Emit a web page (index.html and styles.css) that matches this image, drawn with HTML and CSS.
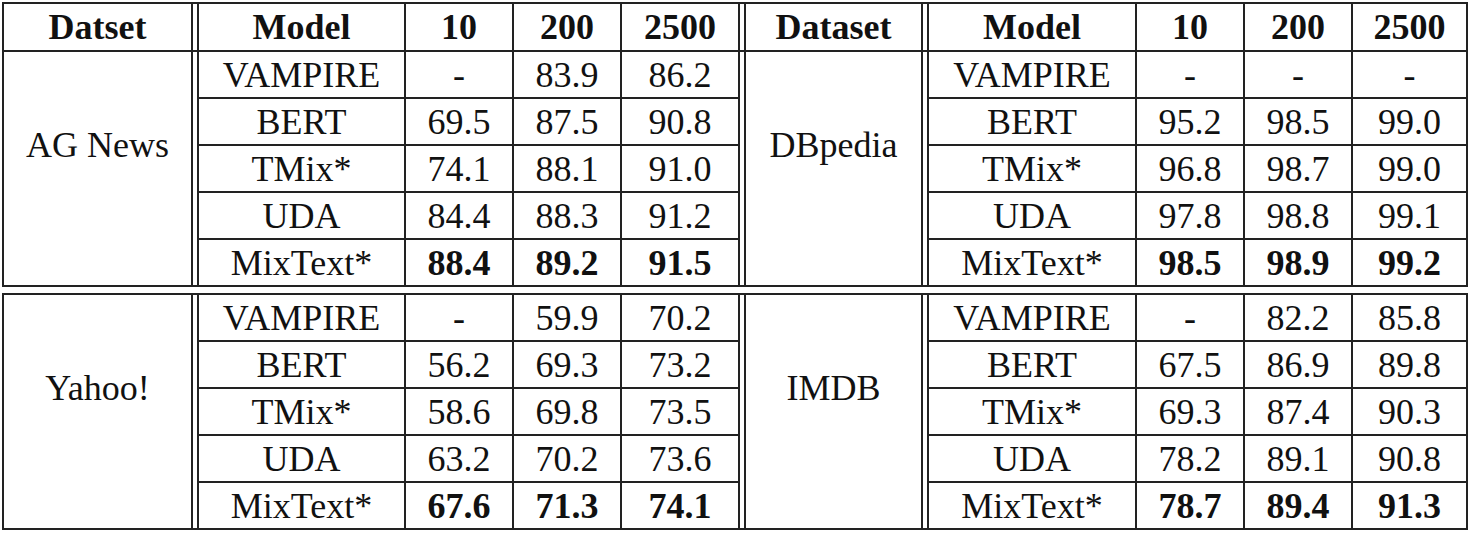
FILE: index.html
```html
<!DOCTYPE html>
<html lang="en">
<head>
  <meta charset="UTF-8" />
  <title>Results</title>
  <link rel="stylesheet" href="styles.css">
</head>
<body>

<!-- Top block: AG News / DBpedia -->
<table class="results">
  <colgroup>
    <col class="c-ds"><col class="c-gap"><col class="c-model"><col class="c-num"><col class="c-num"><col class="c-num-l">
    <col class="c-gap"><col class="c-ds2"><col class="c-gap"><col class="c-model2"><col class="c-num"><col class="c-num"><col class="c-num-r">
  </colgroup>
  <tr class="head">
    <th>Datset</th><td class="gap"></td><th>Model</th><th>10</th><th>200</th><th>2500</th>
    <td class="gap"></td><th>Dataset</th><td class="gap"></td><th>Model</th><th>10</th><th>200</th><th>2500</th>
  </tr>
  <tr>
    <td class="ds" rowspan="5">AG News</td><td class="gap" rowspan="5"></td>
    <td>VAMPIRE</td><td>-</td><td>83.9</td><td>86.2</td>
    <td class="gap" rowspan="5"></td>
    <td class="ds" rowspan="5">DBpedia</td><td class="gap" rowspan="5"></td>
    <td>VAMPIRE</td><td>-</td><td>-</td><td>-</td>
  </tr>
  <tr>
    <td>BERT</td><td>69.5</td><td>87.5</td><td>90.8</td>
    <td>BERT</td><td>95.2</td><td>98.5</td><td>99.0</td>
  </tr>
  <tr>
    <td>TMix*</td><td>74.1</td><td>88.1</td><td>91.0</td>
    <td>TMix*</td><td>96.8</td><td>98.7</td><td>99.0</td>
  </tr>
  <tr>
    <td>UDA</td><td>84.4</td><td>88.3</td><td>91.2</td>
    <td>UDA</td><td>97.8</td><td>98.8</td><td>99.1</td>
  </tr>
  <tr>
    <td>MixText*</td><td class="best">88.4</td><td class="best">89.2</td><td class="best">91.5</td>
    <td>MixText*</td><td class="best">98.5</td><td class="best">98.9</td><td class="best">99.2</td>
  </tr>
</table>

<!-- Bottom block: Yahoo! / IMDB -->
<table class="results">
  <colgroup>
    <col class="c-ds"><col class="c-gap"><col class="c-model"><col class="c-num"><col class="c-num"><col class="c-num-l">
    <col class="c-gap"><col class="c-ds2"><col class="c-gap"><col class="c-model2"><col class="c-num"><col class="c-num"><col class="c-num-r">
  </colgroup>
  <tr>
    <td class="ds" rowspan="5">Yahoo!</td><td class="gap" rowspan="5"></td>
    <td>VAMPIRE</td><td>-</td><td>59.9</td><td>70.2</td>
    <td class="gap" rowspan="5"></td>
    <td class="ds" rowspan="5">IMDB</td><td class="gap" rowspan="5"></td>
    <td>VAMPIRE</td><td>-</td><td>82.2</td><td>85.8</td>
  </tr>
  <tr>
    <td>BERT</td><td>56.2</td><td>69.3</td><td>73.2</td>
    <td>BERT</td><td>67.5</td><td>86.9</td><td>89.8</td>
  </tr>
  <tr>
    <td>TMix*</td><td>58.6</td><td>69.8</td><td>73.5</td>
    <td>TMix*</td><td>69.3</td><td>87.4</td><td>90.3</td>
  </tr>
  <tr>
    <td>UDA</td><td>63.2</td><td>70.2</td><td>73.6</td>
    <td>UDA</td><td>78.2</td><td>89.1</td><td>90.8</td>
  </tr>
  <tr>
    <td>MixText*</td><td class="best">67.6</td><td class="best">71.3</td><td class="best">74.1</td>
    <td>MixText*</td><td class="best">78.7</td><td class="best">89.4</td><td class="best">91.3</td>
  </tr>
</table>

</body>
</html>
```

FILE: styles.css
```css
body {
  margin: 2px;
  background: #fff;
  color: #111;
  font-family: "Liberation Serif", "Times New Roman", serif;
}

/* Results tables */
.results {
  border-collapse: collapse;
  table-layout: fixed;
  width: 1466px;
  border: 2px solid #222;
  font-size: 36px;
}

.results + .results {
  margin-top: 6px;
}

.results tr {
  height: 47px;
}

.results tr.head {
  height: 48px;
}

.results th,
.results td {
  border: 2px solid #222;
  padding: 0;
  text-align: center;
  vertical-align: middle;
  line-height: 1;
  white-space: nowrap;
}

.results th {
  font-weight: bold;
}

.results .gap {
  border-left: none;
  border-right: none;
}

.results .ds {
  padding-bottom: 48px;
}

.best {
  font-weight: bold;
}

/* Column widths */
.c-ds { width: 189px; }
.c-gap { width: 6px; }
.c-model { width: 207px; }
.c-num { width: 108px; }
.c-num-l { width: 118px; }
.c-ds2 { width: 177px; }
.c-model2 { width: 208px; }
.c-num-r { width: 115px; }
```
